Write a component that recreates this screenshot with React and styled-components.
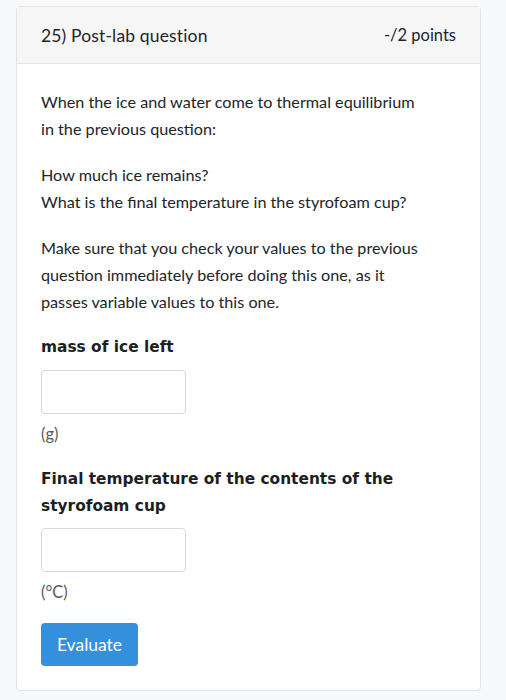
import React from "react";
import styled, { createGlobalStyle } from "styled-components";

const Global = createGlobalStyle`
  html, body { margin: 0; padding: 0; background: #f8f9fa; }
  body { font-family: "Lato", "Open Sans", sans-serif; color: #212529; }
`;

const Page = styled.div`
  padding: 6px 25px 8px 16px;
`;

const Card = styled.div`
  background: #fff;
  border: 1px solid #e2e3e5;
  border-radius: 4px;
  width: 465px;
  box-sizing: border-box;
`;

const Header = styled.div`
  display: flex;
  justify-content: space-between;
  align-items: center;
  height: 56px;
  padding: 0 24px 0 24px;
  background: #f6f6f6;
  border-bottom: 1px solid #e2e3e5;
  font-size: 16.5px;
  color: #212529;
`;

const Title = styled.span`
  font-size: 17.5px;
  letter-spacing: 0.15px;
`;

const Body = styled.div`
  padding: 24px 24px 24px 24px;
`;

const P = styled.p`
  margin: 0 0 19px;
  font-size: 16.2px;
  line-height: 27px;
`;

const Label = styled.div`
  font-family: "DejaVu Sans", "Open Sans", sans-serif;
  font-weight: 700;
  font-size: 15.4px;
  line-height: 27px;
  color: #1d1f21;
  margin-top: ${(p) => p.$top || 0}px;
`;

const Input = styled.input`
  display: block;
  width: 145px;
  height: 44px;
  box-sizing: border-box;
  border: 1px solid #d6d8da;
  border-radius: 4px;
  margin-top: ${(p) => p.$top || 9}px;
  background: #fff;
`;

const Unit = styled.div`
  font-size: 16.5px;
  line-height: 27px;
  color: #5a5a5a;
  margin-top: 7px;
`;

const Button = styled.button`
  display: block;
  margin-top: 17px;
  width: 97px;
  height: 43px;
  border: none;
  border-radius: 4px;
  background: #3490dc;
  color: #fff;
  font-family: inherit;
  font-size: 17.5px;
`;

export default function App() {
  return (
    <>
      <Global />
      <Page>
        <Card>
          <Header>
            <Title>25) Post-lab question</Title>
            <span>-/2 points</span>
          </Header>
          <Body>
            <P>
              When the ice and water come to thermal equilibrium
              <br />
              in the previous question:
            </P>
            <P>
              How much ice remains?
              <br />
              What is the final temperature in the styrofoam cup?
            </P>
            <P>
              Make sure that you check your values to the previous
              <br />
              question immediately before doing this one, as it
              <br />
              passes variable values to this one.
            </P>
            <Label>mass of ice left</Label>
            <Input />
            <Unit>(g)</Unit>
            <Label $top={18}>
              Final temperature of the contents of the
              <br />
              styrofoam cup
            </Label>
            <Input $top={8} />
            <Unit>(°C)</Unit>
            <Button>Evaluate</Button>
          </Body>
        </Card>
      </Page>
    </>
  );
}
